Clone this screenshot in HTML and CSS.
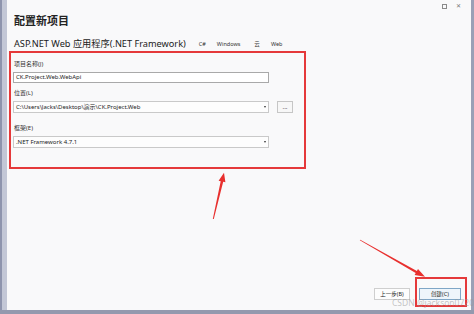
FILE: index.html
```html
<!DOCTYPE html>
<html lang="zh-CN">
<head>
  <meta charset="UTF-8" />
  <title>配置新项目</title>
  <link rel="stylesheet" href="styles.css">
</head>
<body>

  <div class="screen">
    <div class="edge-left"></div>

    <!-- Dialog window -->
    <div class="window">
      <div class="titlebar">
        <span class="win-max"></span>
        <span class="win-close">&#x2715;</span>
      </div>

      <h1>配置新项目</h1>

      <div class="subtitle">
        <span class="template">ASP.NET Web 应用程序(.NET Framework)</span>
        <span class="tag">C#</span>
        <span class="tag">Windows</span>
        <span class="tag">云</span>
        <span class="tag">Web</span>
      </div>

      <!-- Form fields (highlighted in red) -->
      <div class="form-box">
        <label class="field-label">项目名称(J)</label>
        <div class="input">CK.Project.Web.WebApi</div>

        <label class="field-label">位置(L)</label>
        <div class="row">
          <div class="select">
            <span>C:\Users\Jacks\Desktop\演示\CK.Project.Web</span>
            <span class="caret"></span>
          </div>
          <button class="browse">...</button>
        </div>

        <label class="field-label gap">框架(E)</label>
        <div class="select">
          <span>.NET Framework 4.7.1</span>
          <span class="caret"></span>
        </div>
      </div>

      <div class="footer">
        <button class="btn">上一步(B)</button>
        <button class="btn primary">创建(C)</button>
      </div>
    </div>

    <div class="edge-right"></div>
  </div>
  <div class="edge-bottom"></div>

  <!-- Annotations -->
  <svg class="arrows" width="474" height="314" viewBox="0 0 474 314">
    <polygon points="212.8,218.9 220.7,181.2 218.6,180.7 224,172.7 225.4,182.3 223.2,181.8 213.8,219.1" />
    <polygon points="360.2,239.7 416.9,271 418,269 425,276.7 414.6,275 415.7,273 359.8,240.3" />
  </svg>
  <div class="mark-create"></div>
  <div class="watermark">CSDN @jackson0720</div>

</body>
</html>
```

FILE: styles.css
```css
* {
  margin: 0;
  padding: 0;
  box-sizing: border-box;
}

body {
  width: 474px;
  height: 314px;
  overflow: hidden;
  position: relative;
  background: #9ea3b9;
  font-family: 'Noto Sans', 'Noto Sans CJK SC', sans-serif;
  color: #1b1b1b;
}

.screen {
  display: flex;
  height: 310px;
}

.edge-left {
  width: 7px;
  background: linear-gradient(to right, #8e94ad 0 2px, #c3c7d6 2px);
}

.edge-right {
  width: 3px;
  background: #9aa0b6;
}

.edge-bottom {
  height: 4px;
  background: #9499ae;
}

.window {
  width: 464px;
  background: #f9f9fa;
  padding: 0 10px 10px 7px;
  display: flex;
  flex-direction: column;
}

/* window controls */
.titlebar {
  height: 13px;
  display: flex;
  justify-content: flex-end;
  align-items: flex-start;
  gap: 9px;
  padding-top: 4px;
  padding-right: 0;
}

.win-max {
  width: 5px;
  height: 5px;
  border: 1px solid #8a8a8a;
}

.win-close {
  font-size: 6px;
  line-height: 5px;
  color: #777;
}

h1 {
  font-size: 11px;
  line-height: 15px;
  font-weight: 600;
  color: #222;
}

.subtitle {
  margin-top: 10px;
  display: flex;
  align-items: center;
  height: 12px;
}

.template {
  font-size: 9.2px;
  line-height: 12px;
  margin-right: 13px;
}

.tag {
  font-size: 5.5px;
  color: #333;
  margin-right: 11px;
}

.tag:nth-child(3) {
  margin-right: 14px;
}

/* red highlighted field group */
.form-box {
  margin-top: 1px;
  margin-left: -5px;
  width: 297px;
  height: 118px;
  border: 2px solid #e5393a;
  padding: 7px 0 0 2px;
  display: flex;
  flex-direction: column;
}

.field-label {
  font-size: 6px;
  line-height: 8px;
  padding-left: 1px;
  margin-bottom: 4px;
  color: #333;
}

.field-label.gap {
  margin-top: 5px;
}

.input,
.select {
  width: 256px;
  height: 11px;
  border: 1px solid #a9a9a9;
  background: #fff;
  font-size: 6px;
  line-height: 9px;
  padding-left: 2px;
  margin-bottom: 6px;
}

.select {
  height: 12px;
  line-height: 10px;
  border-color: #c9c9c9;
  background: #fdfdfd;
  display: flex;
  justify-content: space-between;
  align-items: center;
  padding-right: 2px;
}

.caret {
  width: 0;
  height: 0;
  border-left: 1.5px solid transparent;
  border-right: 1.5px solid transparent;
  border-top: 2px solid #333;
}

.row {
  display: flex;
  gap: 8px;
}

.browse {
  width: 16px;
  height: 12px;
  border: 1px solid #c6c6c6;
  background: #f7f7f7;
  font-size: 6px;
  line-height: 8px;
  color: #333;
  font-family: inherit;
}

.footer {
  margin-top: auto;
  display: flex;
  justify-content: flex-end;
  gap: 9px;
}

.btn {
  width: 36px;
  height: 12px;
  border: 1px solid #cfcfcf;
  background: #fdfdfd;
  font-family: inherit;
  font-size: 5.5px;
  color: #222;
}

.btn.primary {
  width: 42px;
  border-color: #7fa6c6;
  background: #eef5fb;
}

/* annotations */
.arrows {
  position: absolute;
  left: 0;
  top: 0;
}

.arrows polygon {
  fill: #e8302e;
}

.mark-create {
  position: absolute;
  left: 415px;
  top: 277px;
  width: 52px;
  height: 30px;
  border: 2px solid #e5393a;
}

.watermark {
  position: absolute;
  left: 392px;
  top: 298px;
  font-size: 8.5px;
  line-height: 10px;
  color: rgba(150, 150, 150, 0.55);
  white-space: nowrap;
}
```
